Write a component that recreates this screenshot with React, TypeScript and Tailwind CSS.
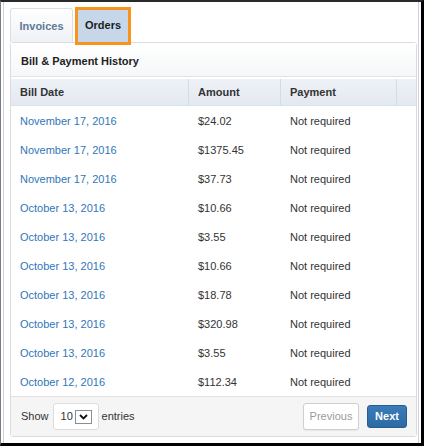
const rows = [
  { date: "November 17, 2016", amount: "$24.02" },
  { date: "November 17, 2016", amount: "$1375.45" },
  { date: "November 17, 2016", amount: "$37.73" },
  { date: "October 13, 2016", amount: "$10.66" },
  { date: "October 13, 2016", amount: "$3.55" },
  { date: "October 13, 2016", amount: "$10.66" },
  { date: "October 13, 2016", amount: "$18.78" },
  { date: "October 13, 2016", amount: "$320.98" },
  { date: "October 13, 2016", amount: "$3.55" },
  { date: "October 12, 2016", amount: "$112.34" },
]

const cols = "grid grid-cols-[178px_92px_116px_1fr]"

export default function App() {
  return (
    <div className="h-[446px] w-[424px] bg-white font-['Liberation_Sans',Arial,sans-serif] text-[11px] text-[#333]">
      <div className="flex h-full flex-col border-t-2 border-l border-r-[3px] border-b-[3px] border-t-[#2a2a2a] border-l-[#7d7d7d] border-r-black border-b-black">
        <div className="ml-[2px] mr-[2px] flex flex-1 flex-col border-x border-[#c9d4e0] pl-[6px] pr-[1px] pt-[5px]">
          {/* tabs */}
          <div className="flex h-[35px] items-end gap-[2px]">
            <button className="flex h-[34px] w-[63px] items-center justify-center rounded-t-[3px] border border-b-0 border-[#dcdfe3] bg-gradient-to-b from-white to-[#eef1f5] pt-[1px] font-bold text-[#5d7a98]">
              Invoices
            </button>
            <button className="relative z-10 -mb-[3px] flex h-[38px] w-[56px] items-center justify-center border-[3px] border-[#f7941e] bg-[#c7d7ea] pb-[1px] font-bold text-[#1c1c1c]">
              Orders
            </button>
          </div>

          {/* panel */}
          <div className="flex h-[395px] flex-col rounded-[3px] border border-[#dcdcdc]">
            <div className="flex h-[34px] items-center border-b border-[#e2e2e2] bg-gradient-to-b from-white to-[#f6f7f9] pl-[10px] pt-[3px] font-bold text-[#222]">
              Bill &amp; Payment History
            </div>

            <div className={`${cols} mt-[2px] h-[27px] border-b border-[#dbe2ea] bg-gradient-to-b from-[#eef2f7] to-[#e3e9f0] font-bold text-[#333]`}>
              <div className="flex items-center border-r border-[#d3dce6] pl-[9px] pt-[1px]">Bill Date</div>
              <div className="flex items-center border-r border-[#d3dce6] pl-[9px] pt-[1px]">Amount</div>
              <div className="flex items-center border-r border-[#d3dce6] pl-[9px] pt-[1px]">Payment</div>
              <div />
            </div>

            <div className="flex flex-col">
              {rows.map((r, i) => (
                <div key={i} className={`${cols} h-[29px] items-center pt-[1px]`}>
                  <a href="#" className="pl-[9px] text-[#3176b8]">
                    {r.date}
                  </a>
                  <div className="pl-[9px]">{r.amount}</div>
                  <div className="pl-[9px]">Not required</div>
                  <div />
                </div>
              ))}
            </div>

            {/* footer */}
            <div className="flex flex-1 items-center justify-between border-t border-[#e2e2e2] bg-[#f5f5f5] pl-[10px] pr-[9px]">
              <div className="flex items-center">
                <span>Show</span>
                <div className="ml-[4px] flex h-[27px] w-[46px] items-center rounded-[3px] border border-[#dcdcdc] bg-white pl-[7px]">
                  <span>10</span>
                  <span className="ml-[2px] flex h-[14px] w-[17px] items-center justify-center border border-[#8c8c8c] bg-white">
                    <svg width="9" height="6" viewBox="0 0 9 6" fill="none">
                      <path d="M1 1l3.5 3.5L8 1" stroke="#111" strokeWidth="1.8" />
                    </svg>
                  </span>
                </div>
                <span className="ml-[3px]">entries</span>
              </div>
              <div className="flex items-center gap-[8px]">
                <button className="h-[27px] w-[56px] rounded-[3px] border border-[#cfcfcf] bg-white text-[#9a9a9a] shadow-[0_1px_1px_rgba(0,0,0,0.06)]">
                  Previous
                </button>
                <button className="h-[23px] w-[40px] rounded-[3px] border border-[#285e8e] bg-gradient-to-b from-[#3a7bb8] to-[#2c6aa3] font-bold text-white">
                  Next
                </button>
              </div>
            </div>
          </div>
        </div>
      </div>
    </div>
  )
}
